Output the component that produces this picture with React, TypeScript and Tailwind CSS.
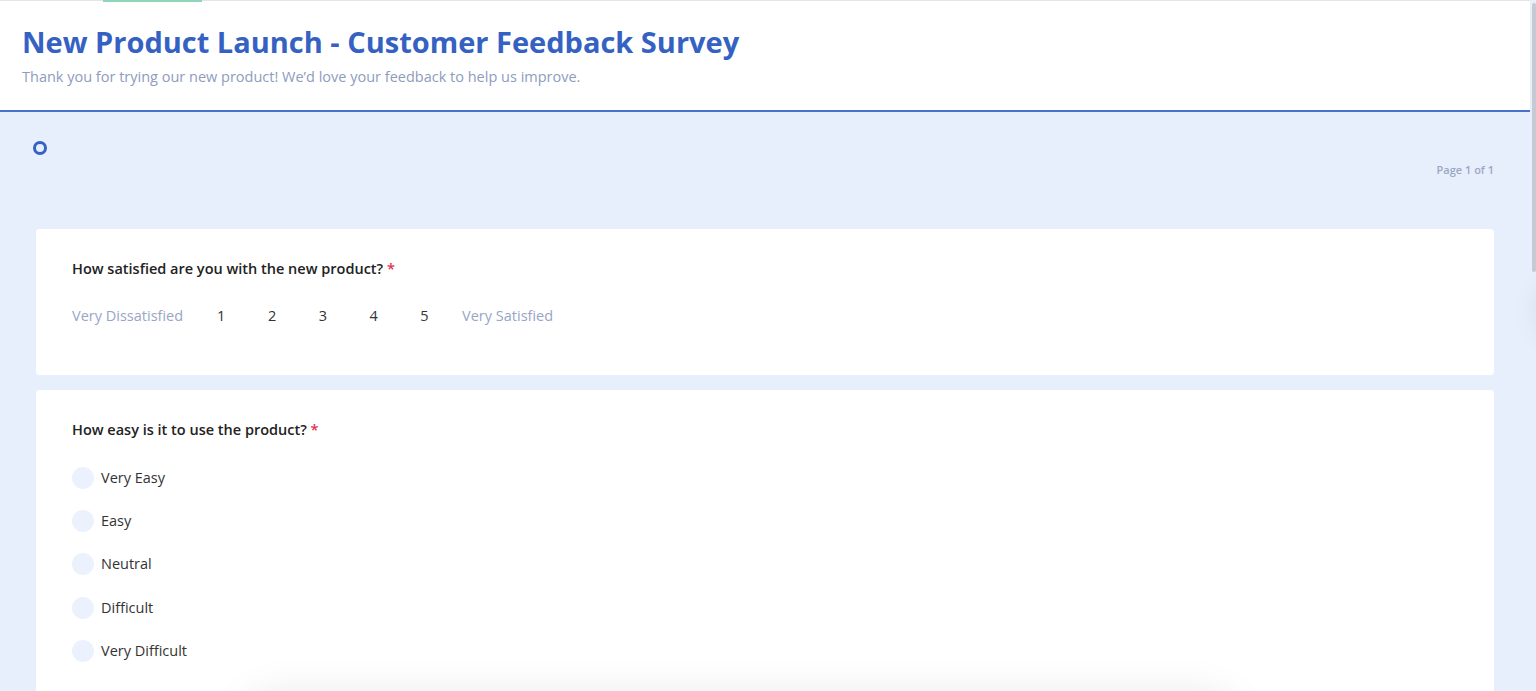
import React from "react";

const font = { fontFamily: '"Open Sans", "Noto Sans", sans-serif' };

export default function App() {
  const options = ["Very Easy", "Easy", "Neutral", "Difficult", "Very Difficult"];
  return (
    <div className="relative flex h-[691px] w-full overflow-hidden bg-[#e8effc] font-['Open_Sans',sans-serif]" style={font}>
      <div className="flex min-w-0 flex-1 flex-col">
        <header className="relative border-t border-b-2 border-t-[#e4e4e4] border-b-[#4a72cc] bg-white px-[22px] pb-[23px] pt-[21px]">
          <div className="absolute left-[103px] top-[-1px] h-[2px] w-[99px] bg-[#8fd6b9]" />
          <h1 className="text-[29px] font-bold leading-[40px] text-[#3562c2]">
            New Product Launch - Customer Feedback Survey
          </h1>
          <p className="mt-[5px] text-[14.5px] leading-[20px] text-[#8e9cbd]">
            Thank you for trying our new product! We’d love your feedback to help us improve.
          </p>
        </header>

        <main className="flex flex-col px-[36px]">
          <div className="pt-[29px]">
            <div className="ml-[-3px] h-[14px] w-[14px] rounded-full border-[3px] border-[#3562c2]" />
          </div>
          <div className="mt-[7px] flex justify-end">
            <span className="text-[11px] font-semibold leading-[16px] text-[#9aa7c3]">Page 1 of 1</span>
          </div>

          <section className="mt-[51px] h-[146px] rounded-[4px] bg-white px-[36px] pt-[30px]">
            <h2 className="text-[14.5px] font-semibold leading-[20px] text-[#222]">
              How satisfied are you with the new product? <span className="text-[#e0324f]">*</span>
            </h2>
            <div className="mt-[27px] flex items-center text-[14.5px] leading-[20px]">
              <span className="text-[#98a5c6]">Very Dissatisfied</span>
              <div className="ml-[25px] flex">
                {[1, 2, 3, 4, 5].map((n) => (
                  <span key={n} className="w-[50.8px] pl-[9px] text-[#333]">
                    {n}
                  </span>
                ))}
              </div>
              <span className="text-[#98a5c6]">Very Satisfied</span>
            </div>
          </section>

          <section className="mt-[15px] h-[320px] rounded-[4px] bg-white px-[36px] pt-[30px]">
            <h2 className="text-[14.5px] font-semibold leading-[20px] text-[#222]">
              How easy is it to use the product? <span className="text-[#e0324f]">*</span>
            </h2>
            <div className="mt-[16px] flex flex-col">
              {options.map((o) => (
                <label key={o} className="flex h-[43.4px] items-center gap-[7px]">
                  <span className="h-[22px] w-[22px] rounded-full bg-[#ecf2fd]" />
                  <span className="text-[14.5px] leading-[20px] text-[#333]">{o}</span>
                </label>
              ))}
            </div>
          </section>
        </main>
      </div>

      <div className="relative w-[6px] shrink-0 bg-[#e8effc]">
        <div className="absolute left-[2px] top-[3px] h-[269px] w-[4px] rounded-full bg-[#c5cad3]" />
      </div>

      <div className="pointer-events-none absolute left-[250px] top-[705px] h-[60px] w-[980px] rounded-full bg-white shadow-[0_0_40px_10px_rgba(0,0,0,0.10)]" />
      <div className="pointer-events-none absolute left-[1548px] top-[285px] h-[50px] w-[50px] rounded-full bg-white shadow-[0_0_30px_8px_rgba(0,0,0,0.10)]" />
    </div>
  );
}
